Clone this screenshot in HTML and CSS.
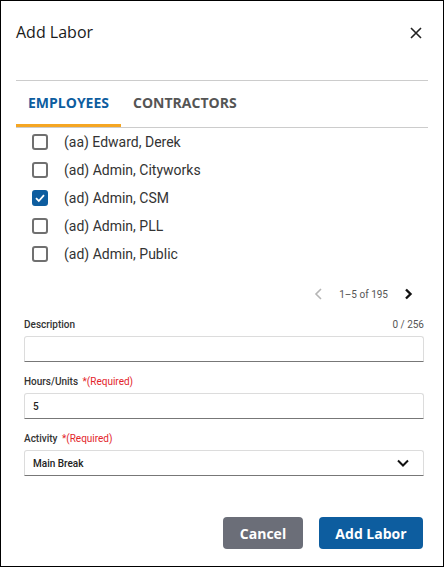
FILE: index.html
```html
<!DOCTYPE html>
<html lang="en">
<head>
    <meta charset="UTF-8">
    <meta name="viewport" content="width=device-width, initial-scale=1.0">
    <title>Add Labor</title>
    <link rel="stylesheet" href="styles.css">
</head>
<body>
    <div class="dialog">
        <div class="dialog-header">
            <h1>Add Labor</h1>
            <button class="close-btn" aria-label="Close">
                <svg width="12" height="12" viewBox="0 0 12 12"><path d="M1 1L11 11M11 1L1 11" stroke="#222" stroke-width="1.6" fill="none"/></svg>
            </button>
        </div>

        <div class="tabs">
            <div class="tab active">Employees</div>
            <div class="tab">Contractors</div>
        </div>

        <ul class="people">
            <li><span class="check"></span>(aa) Edward, Derek</li>
            <li><span class="check"></span>(ad) Admin, Cityworks</li>
            <li><span class="check checked"><svg width="12" height="12" viewBox="0 0 12 12"><path d="M2 6.2L4.8 9L10 3.2" stroke="#fff" stroke-width="1.8" fill="none"/></svg></span>(ad) Admin, CSM</li>
            <li><span class="check"></span>(ad) Admin, PLL</li>
            <li><span class="check"></span>(ad) Admin, Public</li>
        </ul>

        <div class="pager">
            <span class="pager-btn">
                <svg width="24" height="24" viewBox="0 0 24 24"><path d="M14 7L9 12L14 17" stroke="#b5b5b5" stroke-width="1.6" fill="none"/></svg>
            </span>
            <span class="pager-text">1–5 of 195</span>
            <span class="pager-btn">
                <svg width="24" height="24" viewBox="0 0 24 24"><path d="M10 7.5L14.5 12L10 16.5" stroke="#111" stroke-width="2.4" fill="none"/></svg>
            </span>
        </div>

        <form class="labor-form">
            <div class="field">
                <div class="field-label">
                    <span>Description</span>
                    <span class="counter">0 / 256</span>
                </div>
                <div class="input"></div>
            </div>
            <div class="field">
                <div class="field-label">
                    <span>Hours/Units <em class="req">*(Required)</em></span>
                </div>
                <div class="input">5</div>
            </div>
            <div class="field">
                <div class="field-label">
                    <span>Activity <em class="req">*(Required)</em></span>
                </div>
                <div class="input select">
                    <span>Main Break</span>
                    <svg width="16" height="16" viewBox="0 0 16 16"><path d="M3 5.5L8 10.5L13 5.5" stroke="#111" stroke-width="2" fill="none"/></svg>
                </div>
            </div>
        </form>

        <div class="actions">
            <button class="btn btn-cancel">Cancel</button>
            <button class="btn btn-primary">Add Labor</button>
        </div>
    </div>
</body>
</html>
```

FILE: styles.css
```css
body {
    margin: 0;
    font-family: Roboto, "Liberation Sans", sans-serif;
    color: #333;
    background: #fff;
}
.dialog {
    width: 444px;
    height: 567px;
    box-sizing: border-box;
    border: 1px solid #000;
    padding: 0 15px;
    display: flex;
    flex-direction: column;
}
.dialog-header {
    height: 79px;
    display: flex;
    justify-content: space-between;
    align-items: flex-start;
    border-bottom: 1px solid #ccc;
}
.dialog-header h1 {
    margin: 19px 0 0 0;
    font-family: "Open Sans", sans-serif;
    font-size: 16px;
    font-weight: 500;
    line-height: 24px;
    color: #1a1a1a;
}
.close-btn {
    margin: 26px 6px 0 0;
    padding: 0;
    border: none;
    background: none;
    width: 12px;
    height: 12px;
    display: flex;
}
.tabs {
    display: flex;
    border-bottom: 1px solid #ccc;
}
.tab {
    height: 46px;
    box-sizing: border-box;
    padding: 0 12px;
    line-height: 43px;
    border-bottom: 3px solid transparent;
    font-family: "Open Sans", sans-serif;
    font-size: 14px;
    font-weight: 700;
    text-transform: uppercase;
    color: #555;
}
.tab.active {
    color: #0d5d9f;
    border-bottom-color: #f5a623;
}
.people {
    list-style: none;
    margin: 0;
    padding: 0 0 0 16px;
}
.people li {
    height: 28px;
    display: flex;
    align-items: center;
    gap: 16px;
    font-size: 14px;
    color: #333;
}
.check {
    width: 16px;
    height: 16px;
    box-sizing: border-box;
    border: 2px solid #707070;
    border-radius: 3px;
    display: flex;
    align-items: center;
    justify-content: center;
}
.check.checked {
    background: #0d5d9f;
    border-color: #0d5d9f;
}
.pager {
    margin-top: 10px;
    height: 32px;
    display: flex;
    align-items: center;
    justify-content: flex-end;
    gap: 8px;
    padding-right: 8px;
}
.pager-btn {
    display: flex;
}
.pager-text {
    font-size: 10px;
    color: #555;
}
.labor-form {
    margin-top: 8px;
    padding: 0 4px 0 8px;
    display: flex;
    flex-direction: column;
    gap: 13px;
}
.field-label {
    display: flex;
    justify-content: space-between;
    font-size: 10px;
    line-height: 14px;
    font-weight: 500;
    color: #333;
    margin-bottom: 4px;
}
.counter {
    font-weight: 400;
    color: #555;
}
.req {
    font-style: normal;
    font-weight: 400;
    color: #e3242b;
    margin-left: 2px;
}
.input {
    height: 26px;
    box-sizing: border-box;
    border: 1px solid #dcdcdc;
    border-bottom: 1px solid #777;
    border-radius: 3px 3px 0 0;
    padding: 0 8px;
    font-size: 10px;
    font-weight: 500;
    color: #222;
    display: flex;
    align-items: center;
}
.select {
    justify-content: space-between;
    padding-right: 12px;
}
.actions {
    margin-top: 41px;
    display: flex;
    justify-content: flex-end;
    gap: 16px;
    padding-right: 5px;
}
.btn {
    height: 32px;
    border: none;
    border-radius: 4px;
    color: #fff;
    font-family: "Open Sans", sans-serif;
    font-size: 14px;
    font-weight: 700;
    cursor: pointer;
}
.btn-cancel {
    width: 80px;
    background: #6b6e78;
}
.btn-primary {
    width: 104px;
    background: #0d5d9f;
}
```
